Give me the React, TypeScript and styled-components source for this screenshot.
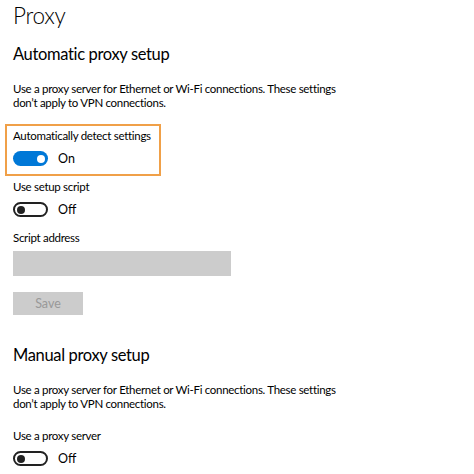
import React from "react";
import styled, { createGlobalStyle } from "styled-components";

const Global = createGlobalStyle`
  html, body { margin: 0; padding: 0; background: #ffffff; }
  body { font-family: "Segoe UI", Lato, "Noto Sans", sans-serif; color: #000; }
`;

const Page = styled.div`
  width: 474px;
  height: 474px;
  box-sizing: border-box;
  padding: 0 13px;
  background: #fff;
  overflow: hidden;
  display: flex;
  flex-direction: column;
`;

const Title = styled.h1`
  margin: 0;
  font-size: 22.5px;
  font-weight: 300;
  letter-spacing: -0.3px;
  line-height: 32px;
  color: #000;
`;

const Heading = styled.h2<{ $top: number }>`
  margin: ${(p) => p.$top}px 0 0;
  font-size: 16.5px;
  font-weight: 400;
  letter-spacing: -0.35px;
  line-height: 22px;
  color: #000;
`;

const Desc = styled.p<{ $top: number }>`
  margin: ${(p) => p.$top}px 0 0;
  font-size: 11.5px;
  letter-spacing: -0.3px;
  line-height: 13.5px;
  white-space: nowrap;
  color: #000;
`;

const Setting = styled.div<{ $top: number; $highlight?: boolean }>`
  margin-top: ${(p) => p.$top}px;
  display: flex;
  flex-direction: column;
  align-self: flex-start;
  ${(p) =>
    p.$highlight
      ? `
    margin-left: -8px;
    padding: 3px 8px 8px 6px;
    border: 2px solid #f0a048;
  `
      : ""}
`;

const Label = styled.div`
  font-size: 11.5px;
  letter-spacing: -0.3px;
  line-height: 14px;
  white-space: nowrap;
  color: #000;
`;

const ToggleRow = styled.div`
  margin-top: 8px;
  display: flex;
  align-items: center;
  gap: 10px;
`;

const Track = styled.div<{ $on: boolean }>`
  width: 35px;
  height: 15px;
  box-sizing: border-box;
  border-radius: 8px;
  display: flex;
  align-items: center;
  justify-content: ${(p) => (p.$on ? "flex-end" : "flex-start")};
  padding: 0 ${(p) => (p.$on ? 3 : 2)}px;
  background: ${(p) => (p.$on ? "#0078d7" : "#fff")};
  border: ${(p) => (p.$on ? "none" : "2px solid #222")};
`;

const Knob = styled.div<{ $on: boolean }>`
  width: 8px;
  height: 8px;
  border-radius: 50%;
  background: ${(p) => (p.$on ? "#fff" : "#222")};
`;

const State = styled.span`
  font-size: 12.5px;
  line-height: 15px;
  color: #000;
`;

const Input = styled.div`
  margin-top: 6px;
  width: 218px;
  height: 25px;
  background: #cccccc;
`;

const Button = styled.button`
  margin-top: 16px;
  width: 70px;
  height: 23px;
  border: none;
  background: #cccccc;
  color: #999999;
  font-family: inherit;
  font-size: 12.5px;
  padding: 0;
  align-self: flex-start;
`;

const FieldLabel = styled(Label)<{ $top: number }>`
  margin-top: ${(p) => p.$top}px;
`;

function Toggle({ on }: { on: boolean }) {
  return (
    <ToggleRow>
      <Track $on={on}>
        <Knob $on={on} />
      </Track>
      <State>{on ? "On" : "Off"}</State>
    </ToggleRow>
  );
}

function Description({ top }: { top: number }) {
  return (
    <Desc $top={top}>
      Use a proxy server for Ethernet or Wi-Fi connections. These settings
      <br />
      don{"\u2019"}t apply to VPN connections.
    </Desc>
  );
}

export default function App() {
  return (
    <>
      <Global />
      <Page>
        <Title>Proxy</Title>
        <Heading $top={11}>Automatic proxy setup</Heading>
        <Description top={17} />
        <Setting $top={15} $highlight>
          <Label>Automatically detect settings</Label>
          <Toggle on />
        </Setting>
        <Setting $top={4}>
          <Label>Use setup script</Label>
          <Toggle on={false} />
        </Setting>
        <FieldLabel $top={14}>Script address</FieldLabel>
        <Input />
        <Button disabled>Save</Button>
        <Heading $top={29}>Manual proxy setup</Heading>
        <Description top={17} />
        <Setting $top={19}>
          <Label>Use a proxy server</Label>
          <Toggle on={false} />
        </Setting>
      </Page>
    </>
  );
}
